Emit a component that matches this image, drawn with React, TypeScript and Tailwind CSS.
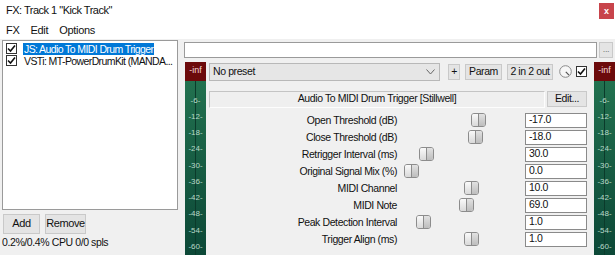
import React from "react";

type Param = { label: string; value: string; pos: number };

const params: Param[] = [
  { label: "Open Threshold (dB)", value: "-17.0", pos: 69 },
  { label: "Close Threshold (dB)", value: "-18.0", pos: 66 },
  { label: "Retrigger Interval (ms)", value: "30.0", pos: 17 },
  { label: "Original Signal Mix (%)", value: "0.0", pos: 2 },
  { label: "MIDI Channel", value: "10.0", pos: 62 },
  { label: "MIDI Note", value: "69.0", pos: 57 },
  { label: "Peak Detection Interval", value: "1.0", pos: 14 },
  { label: "Trigger Align (ms)", value: "1.0", pos: 62 },
];

const marks = ["-6-", "-12-", "-18-", "-24-", "-30-", "-36-", "-42-", "-48-", "-54-", "-60-"];

const ui = "font-['Liberation_Sans',Arial,sans-serif]";

function CheckBox() {
  return (
    <span className="flex h-[11px] w-[11px] shrink-0 items-center justify-center border border-[#333] bg-white">
      <svg width="9" height="9" viewBox="0 0 9 9">
        <path d="M1 4.5 L3.5 7 L8 1.5" fill="none" stroke="#111" strokeWidth="1.6" />
      </svg>
    </span>
  );
}

function Meter() {
  return (
    <div className="flex w-[21px] shrink-0 flex-col tracking-normal">
      <div className="flex h-[19px] items-center justify-center bg-[#6c0a0b] text-[9px] text-[#f3d6d6]">
        -inf
      </div>
      <div className="relative flex-1 bg-gradient-to-b from-[#22714f] to-[#0c4837]">
        <div className="absolute bottom-0 left-[10px] top-0 w-px bg-[#0b3a2b]" />
        <div className="relative flex flex-col items-center pt-[12px]">
          {marks.map((m) => (
            <div
              key={m}
              className="flex h-[16.25px] items-center text-[8px] leading-none text-[#b9d9c8]"
            >
              {m}
            </div>
          ))}
        </div>
      </div>
    </div>
  );
}

function Thumb({ pos }: { pos: number }) {
  return (
    <div
      className="absolute top-[1px] flex h-[14px] w-[15px] overflow-hidden rounded-[3px] border border-[#8c8c8c]"
      style={{ left: pos }}
    >
      <div className="h-full flex-1 bg-gradient-to-b from-[#fafafa] to-[#d9d9d9]" />
      <div className="h-full w-px bg-[#8c8c8c]" />
      <div className="h-full flex-1 bg-gradient-to-b from-[#e2e2e2] to-[#bdbdbd]" />
    </div>
  );
}

function Button({ children, className }: { children: React.ReactNode; className: string }) {
  return (
    <div
      className={`flex shrink-0 items-center justify-center whitespace-nowrap border border-[#c9c9c9] bg-[#e4e4e4] text-[#111] ${className}`}
    >
      {children}
    </div>
  );
}

export default function App() {
  return (
    <div
      className={`flex h-[255px] w-[615px] flex-col overflow-hidden bg-white text-[10.5px] tracking-[-0.4px] text-[#111] ${ui}`}
    >
      {/* title bar */}
      <div className="flex h-[26px] items-center justify-between pl-[6px] pr-[1px]">
        <span className="text-[11px] tracking-[-0.5px]">FX: Track 1 "Kick Track"</span>
        <div className="mt-[2px] flex h-[16px] w-[15px] items-center justify-center bg-[#c8444b] text-[9px] font-bold tracking-normal text-white">
          x
        </div>
      </div>
      {/* menu */}
      <div className="flex h-[18px] items-center gap-[11px] pl-[6px] pt-[2px] text-[11px] tracking-[-0.3px]">
        <span>FX</span>
        <span>Edit</span>
        <span>Options</span>
      </div>

      <div className="flex flex-1 bg-[#f0f0f0] pt-[1px]">
        {/* left column */}
        <div className="flex w-[181px] shrink-0 flex-col pl-[2px] pr-[3px]">
          <div className="flex h-[170px] flex-col border border-[#9a9a9a] bg-white pl-[3px] pt-[2px] text-[10.5px] tracking-[-0.6px]">
            <div className="flex h-[12px] items-center gap-[6px]">
              <CheckBox />
              <span className="whitespace-nowrap bg-[#0078d7] px-[1px] leading-[12px] text-white">
                JS: Audio To MIDI Drum Trigger
              </span>
            </div>
            <div className="flex h-[12px] items-center gap-[6px]">
              <CheckBox />
              <span className="whitespace-nowrap px-[1px] leading-[12px]">
                VSTi: MT-PowerDrumKit (MANDA...
              </span>
            </div>
          </div>
          <div className="mt-[4px] flex gap-[5px] pl-[1px]">
            <Button className="h-[20px] w-[37px] text-[11px]">Add</Button>
            <Button className="h-[20px] w-[41px] text-[11px]">Remove</Button>
          </div>
          <div className="mt-[2px] whitespace-nowrap leading-[13px]">0.2%/0.4% CPU 0/0 spls</div>
        </div>

        {/* right column */}
        <div className="flex flex-1 flex-col pl-[3px]">
          <div className="flex h-[18px] gap-[2px] pt-[2px]">
            <div className="h-[16px] w-[413px] border border-[#9a9a9a] bg-white" />
            <Button className="h-[16px] w-[14px] text-[9px] text-[#777]">...</Button>
          </div>

          <div className="mt-[4px] flex flex-1 gap-[3px] pl-[1px]">
            <Meter />

            <div className="flex flex-1 flex-col">
              {/* toolbar */}
              <div className="mt-[1px] flex h-[18px] items-center">
                <div className="flex h-[18px] w-[231px] shrink-0 items-center justify-between border border-[#b8b8b8] bg-[#e6e6e6] pl-[3px] pr-[4px]">
                  <span>No preset</span>
                  <svg width="9" height="6" viewBox="0 0 9 6">
                    <path d="M0.5 0.5 L4.5 5 L8.5 0.5" fill="none" stroke="#666" strokeWidth="1" />
                  </svg>
                </div>
                <Button className="ml-[8px] h-[16px] w-[12px]">+</Button>
                <Button className="ml-[5px] h-[16px] w-[37px]">Param</Button>
                <Button className="ml-[5px] h-[16px] w-[46px]">2 in 2 out</Button>
                <svg className="ml-[6px] shrink-0" width="13" height="13" viewBox="0 0 13 13">
                  <circle cx="6.5" cy="6.5" r="5.8" fill="#f7f7f7" stroke="#8a8a8a" strokeWidth="1" />
                  <path d="M6.8 6.8 L10 10.2" stroke="#555" strokeWidth="1.2" />
                </svg>
                <span className="ml-[4px]">
                  <CheckBox />
                </span>
              </div>

              {/* header */}
              <div className="mt-[10px] flex h-[17px] items-center">
                <div className="flex h-[17px] w-[336px] shrink-0 items-center justify-center border border-t-[#c4c4c4] border-l-[#c4c4c4] border-r-[#fdfdfd] border-b-[#fdfdfd] bg-[#efefef]">
                  Audio To MIDI Drum Trigger [Stillwell]
                </div>
                <Button className="ml-[2px] h-[16px] w-[40px]">Edit...</Button>
              </div>

              {/* params */}
              <div className="mt-[4px] flex flex-col">
                {params.map((p) => (
                  <div key={p.label} className="flex h-[17px] items-center">
                    <div className="w-[188px] shrink-0 whitespace-nowrap text-right leading-none">
                      {p.label}
                    </div>
                    <div className="relative ml-[5px] h-[16px] w-[120px] shrink-0">
                      <Thumb pos={p.pos} />
                    </div>
                    <div className="ml-[3px] flex h-[15px] w-[62px] shrink-0 items-center border border-[#8a8a8a] bg-white pl-[3px]">
                      {p.value}
                    </div>
                  </div>
                ))}
              </div>
            </div>

            <Meter />
          </div>
        </div>
      </div>
    </div>
  );
}
